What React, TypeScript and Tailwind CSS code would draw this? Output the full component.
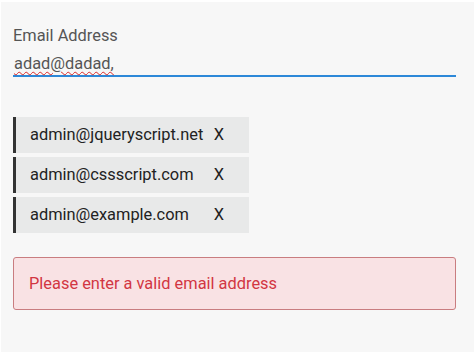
export default function App() {
  const emails = ["admin@jqueryscript.net", "admin@cssscript.com", "admin@example.com"];

  return (
    <div className="w-[474px] h-[354px] bg-white pt-[2px] pl-[1px] overflow-hidden" style={{ fontFamily: "Roboto, 'Liberation Sans', sans-serif" }}>
      <div className="h-[350px] bg-[#f7f7f7] pl-[12px] pr-[18px] pt-[22px]">
        {/* Input field */}
        <label className="block text-[16.4px] leading-[24px] text-[#555]">Email Address</label>
        <div className="mt-[5px] h-[24px] border-b-2 border-[#2d88d8] text-[16.4px] leading-[22px] text-[#555] pl-px">
          <span className="underline decoration-wavy decoration-[#d82828] decoration-1 underline-offset-[2px]">adad@dadad,</span>
        </div>

        {/* Tags */}
        <div className="mt-[40px] flex flex-col gap-[4px]">
          {emails.map((e) => (
            <div key={e} className="w-[236px] h-[36px] flex items-center justify-between bg-[#e8e9e9] border-l-[3px] border-[#333] pl-[14px] pr-[25px] text-[16.4px] text-[#222]">
              <span>{e}</span>
              <span>X</span>
            </div>
          ))}
        </div>

        {/* Error */}
        <div className="mt-[24px] h-[53px] flex items-center bg-[#f9e2e4] border border-[#c97d80] rounded-[3px] pl-[15px] text-[16.4px] leading-[24px] text-[#d23642]">
          Please enter a valid email address
        </div>
      </div>
    </div>
  );
}
